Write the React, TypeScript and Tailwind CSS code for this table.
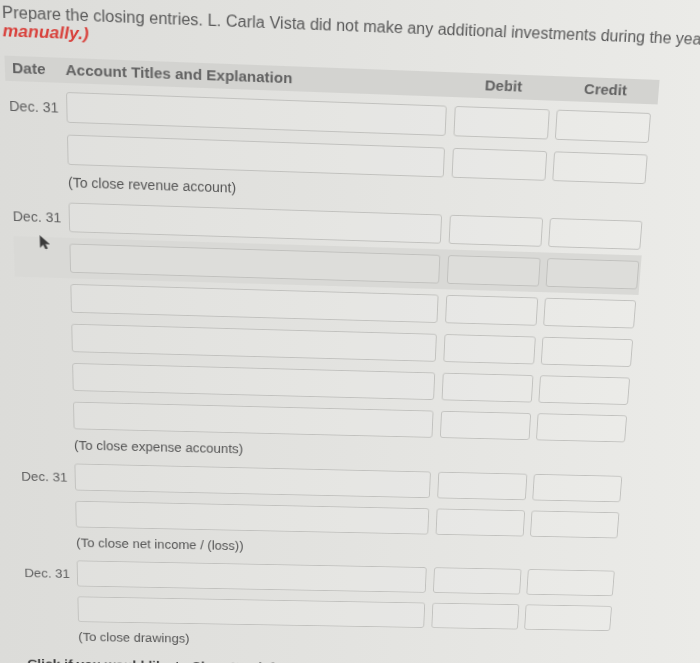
import React from "react";

type Pt = [number, number];

// The reference is a photo of a screen, taken at an angle. The page below is laid
// out flat; this projective transform (computed from four matching corners) tilts it
// like the photo.
function homography(src: Pt[], dst: Pt[]): string {
  const A: number[][] = [];
  const b: number[] = [];
  for (let i = 0; i < 4; i++) {
    const [x, y] = src[i];
    const [u, v] = dst[i];
    A.push([x, y, 1, 0, 0, 0, -x * u, -y * u]);
    b.push(u);
    A.push([0, 0, 0, x, y, 1, -x * v, -y * v]);
    b.push(v);
  }
  const n = 8;
  for (let c = 0; c < n; c++) {
    let p = c;
    for (let r = c + 1; r < n; r++) if (Math.abs(A[r][c]) > Math.abs(A[p][c])) p = r;
    [A[c], A[p]] = [A[p], A[c]];
    [b[c], b[p]] = [b[p], b[c]];
    for (let r = 0; r < n; r++) {
      if (r === c) continue;
      const f = A[r][c] / A[c][c];
      for (let k = c; k < n; k++) A[r][k] -= f * A[c][k];
      b[r] -= f * b[c];
    }
  }
  const h = b.map((v, i) => v / A[i][i]);
  const [a, bb, c, d, e, f, g, hh] = h;
  return `matrix3d(${a},${d},0,${g},${bb},${e},0,${hh},0,0,1,0,${c},${f},0,1)`;
}

const TILT = homography(
  [
    [66, 92],
    [651, 92],
    [66, 677],
    [651, 677],
  ],
  [
    [66, 92],
    [651, 113],
    [78, 622],
    [610, 631],
  ]
);

function Cursor() {
  return (
    <svg
      width="11"
      height="16"
      viewBox="0 0 11 16"
      className="absolute left-[26px] top-[-2px]"
    >
      <path
        d="M0.5 0.5 L0.5 13 L3.6 10 L6 15 L8 14 L5.7 9.2 L10 9.2 Z"
        fill="#3a3a3a"
        stroke="#6a6a6a"
        strokeWidth="0.6"
      />
    </svg>
  );
}

function Field({ w, className = "" }: { w: string; className?: string }) {
  return (
    <input
      type="text"
      readOnly
      className={`h-[31px] ${w} rounded-[3px] border border-[#c1c1be] bg-white/10 outline-none ${className}`}
    />
  );
}

function Row({ date, hover }: { date?: string; hover?: boolean }) {
  return (
    <div
      className={`relative ml-[10px] flex h-[43px] w-[643px] items-center ${
        hover ? "bg-[#d9d9d6]" : ""
      }`}
    >
      {hover && <Cursor />}
      <div className="w-[56px] text-[14px] leading-[18px] text-[#606060]">{date}</div>
      <Field w="w-[378px]" />
      <Field w="w-[96px]" className="ml-[8px]" />
      <Field w="w-[96px]" className="ml-[7px]" />
    </div>
  );
}

function Entry({
  rows,
  note,
  hoverRow,
  first,
}: {
  rows: number;
  note: string;
  hoverRow?: number;
  first?: boolean;
}) {
  return (
    <div className={first ? "" : "mt-[5px]"}>
      {Array.from({ length: rows }).map((_, i) => (
        <Row key={i} date={i === 0 ? "Dec. 31" : undefined} hover={hoverRow === i} />
      ))}
      <div className="ml-[66px] mt-[2px] h-[20px] text-[14px] leading-[20px] text-[#555]">
        {note}
      </div>
    </div>
  );
}

export default function App() {
  return (
    <div className="relative h-[663px] w-[700px] overflow-hidden bg-linear-to-r from-[#dcdcd9] via-[#e3e3e0] to-[#ebebe8]">
      <div
        className="w-[700px] origin-top-left font-['Liberation_Sans',Arial,sans-serif]"
        style={{ transform: TILT }}
      >
        <div className="pl-[6px] pt-[7px]">
          <div className="whitespace-nowrap text-[16px] leading-[18px] text-[#5a5a5a]">
            Prepare the closing entries. L. Carla Vista did not make any additional investments during the year.
          </div>
          <div className="text-[17px] font-bold italic leading-[18px] text-[#d8403b]">manually.)</div>
        </div>

        <div className="ml-[7px] mt-[15px] flex h-[25px] w-[650px] items-center bg-[#d3d3d0] text-[15px] font-bold text-[#626262]">
          <div className="w-[59px] pl-[7px]">Date</div>
          <div className="w-[386px]">Account Titles and Explanation</div>
          <div className="w-[96px] text-center">Debit</div>
          <div className="ml-[7px] w-[96px] text-center">Credit</div>
        </div>

        <div className="mt-[3px]">
          <Entry first rows={2} note="(To close revenue account)" />
          <Entry rows={6} hoverRow={1} note="(To close expense accounts)" />
          <Entry rows={2} note="(To close net income / (loss))" />
          <Entry rows={2} note="(To close drawings)" />
        </div>

        <div className="ml-[10px] mt-[14px] text-[15px] font-bold leading-[20px] text-[#3f3f3f]">
          Click if you would like to Show Work for this question:
        </div>
      </div>
    </div>
  );
}
